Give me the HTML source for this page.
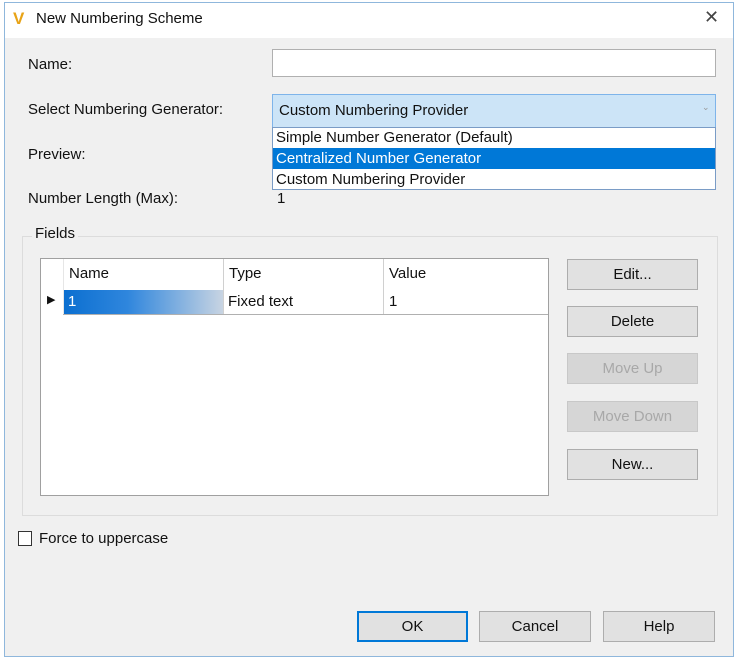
<!DOCTYPE html>
<html><head><style>
*{box-sizing:border-box;margin:0;padding:0}
body{width:737px;height:657px;background:#fff;font-family:"Liberation Sans",sans-serif;font-size:15px;color:#111;position:relative;overflow:hidden}
.win{position:absolute;left:4px;top:2px;width:730px;height:655px;border:1px solid #8fb7dc;background:#f0f0f0}
.title{position:absolute;left:0;top:0;width:728px;height:35px;background:#fff}
.a{position:absolute;white-space:nowrap}
.box{position:absolute}
.btn{position:absolute;width:131px;height:31px;background:#e1e1e1;border:1px solid #adadad;text-align:center;line-height:29px}
.dis{background:#d6d6d6;border-color:#c8c8c8;color:#a8a8a8}
</style></head><body>
<div class="win">
<div class="title"></div>
</div>
<div class="a" style="left:13px;top:9px;color:#e8a317;font-weight:bold;font-size:17px">V</div>
<div class="a" style="left:36px;top:10px;font-size:15px">New Numbering Scheme</div>
<div class="a" style="left:704px;top:7px;font-size:18px;color:#444;font-weight:normal">✕</div>

<div class="a" style="left:28px;top:56px">Name:</div>
<div class="box" style="left:272px;top:49px;width:444px;height:28px;background:#fff;border:1px solid #b0b0b0"></div>

<div class="a" style="left:28px;top:101px">Select Numbering Generator:</div>
<div class="box" style="left:272px;top:94px;width:444px;height:34px;background:#cce4f7;border:1px solid #7eb4ea"></div>
<div class="a" style="left:279px;top:102px">Custom Numbering Provider</div>
<div class="a" style="left:702px;top:102px;font-size:9px;color:#999">⌄</div>
<div class="box" style="left:272px;top:127px;width:444px;height:63px;background:#fff;border:1px solid #7a9cc6"></div>
<div class="box" style="left:273px;top:148px;width:442px;height:21px;background:#0078d7"></div>
<div class="a" style="left:276px;top:129px">Simple Number Generator (Default)</div>
<div class="a" style="left:276px;top:150px;color:#fff">Centralized Number Generator</div>
<div class="a" style="left:276px;top:171px">Custom Numbering Provider</div>

<div class="a" style="left:28px;top:146px">Preview:</div>
<div class="a" style="left:28px;top:190px">Number Length (Max):</div>
<div class="a" style="left:277px;top:190px">1</div>

<div class="box" style="left:22px;top:236px;width:696px;height:280px;border:1px solid #dcdcdc"></div>
<div class="a" style="left:32px;top:225px;background:#f0f0f0;padding:0 3px">Fields</div>

<div class="box" style="left:40px;top:258px;width:509px;height:238px;background:#fff;border:1px solid #a0a0a0"></div>
<div class="box" style="left:63px;top:259px;width:1px;height:56px;background:#e6e6e6"></div>
<div class="box" style="left:223px;top:259px;width:1px;height:56px;background:#d0d0d0"></div>
<div class="box" style="left:383px;top:259px;width:1px;height:56px;background:#d0d0d0"></div>
<div class="box" style="left:63px;top:314px;width:485px;height:1px;background:#b0b0b0"></div>
<div class="a" style="left:69px;top:265px">Name</div>
<div class="a" style="left:229px;top:265px">Type</div>
<div class="a" style="left:389px;top:265px">Value</div>
<div class="box" style="left:64px;top:290px;width:159px;height:24px;background:linear-gradient(90deg,#0b6fd0,#2f86dd 40%,#c8d4e2)"></div>
<div class="a" style="left:68px;top:293px;color:#fff">1</div>
<div class="a" style="left:47px;top:293px;font-size:11px">▶</div>
<div class="a" style="left:228px;top:293px">Fixed text</div>
<div class="a" style="left:389px;top:293px">1</div>

<div class="btn" style="left:567px;top:259px">Edit...</div>
<div class="btn" style="left:567px;top:306px">Delete</div>
<div class="btn dis" style="left:567px;top:353px">Move Up</div>
<div class="btn dis" style="left:567px;top:401px">Move Down</div>
<div class="btn" style="left:567px;top:449px">New...</div>

<div class="box" style="left:18px;top:531px;width:14px;height:15px;background:#fff;border:1px solid #333"></div>
<div class="a" style="left:39px;top:530px">Force to uppercase</div>

<div class="btn" style="left:357px;top:611px;width:111px;border:2px solid #0078d7;line-height:27px">OK</div>
<div class="btn" style="left:479px;top:611px;width:112px">Cancel</div>
<div class="btn" style="left:603px;top:611px;width:112px">Help</div>
</body></html>
